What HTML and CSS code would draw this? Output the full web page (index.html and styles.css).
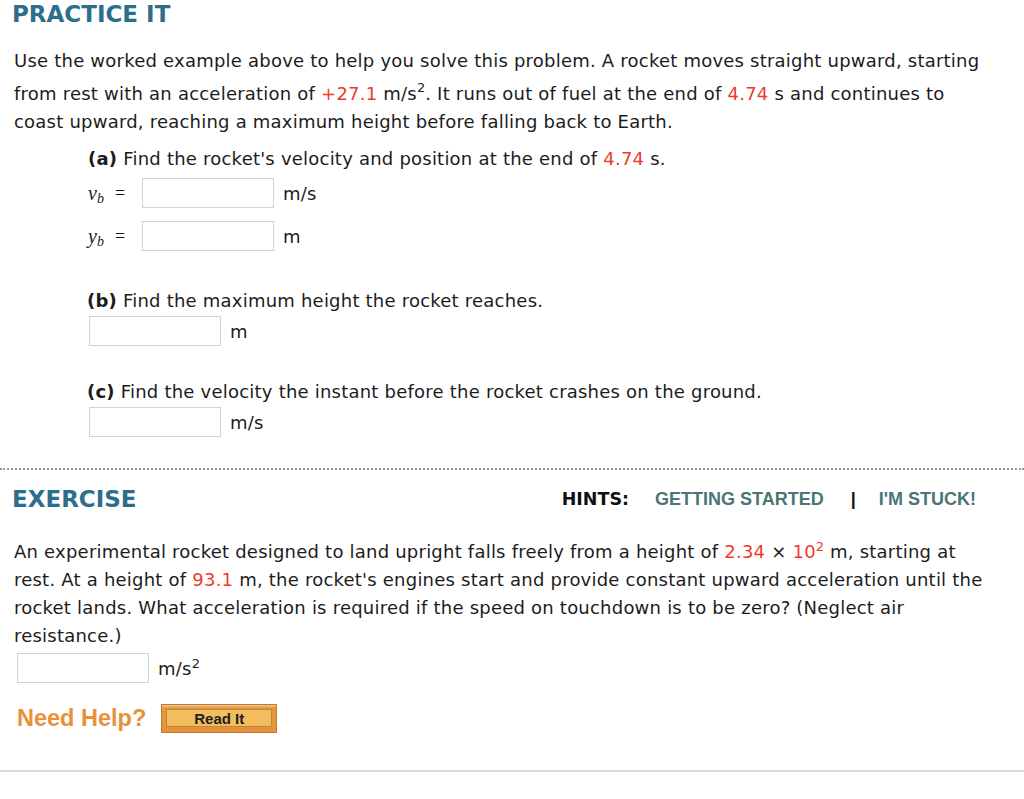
FILE: index.html
```html
<!DOCTYPE html>
<html>
<head>
<meta charset="utf-8">
<link rel="stylesheet" href="styles.css">
</head>
<body>
<section class="practice">
  <h2 class="title">PRACTICE IT</h2>
  <p class="text intro">Use the worked example above to help you solve this problem. A rocket moves straight upward, starting from rest with an acceleration of <span class="red">+27.1</span> m/s<sup>2</sup>. It runs out of fuel at the end of <span class="red">4.74</span> s and continues to coast upward, reaching a maximum height before falling back to Earth.</p>
  <div class="part part-a">
    <p class="text q"><b>(a)</b> Find the rocket's velocity and position at the end of <span class="red">4.74</span> s.</p>
    <div class="eqrow">
      <span class="var"><i>v<sub>b</sub></i></span><span class="eq">=</span><span class="box"></span><span class="unit">m/s</span>
    </div>
    <div class="eqrow second">
      <span class="var"><i>y<sub>b</sub></i></span><span class="eq">=</span><span class="box"></span><span class="unit">m</span>
    </div>
  </div>
  <div class="part part-b">
    <p class="text q"><b>(b)</b> Find the maximum height the rocket reaches.</p>
    <div class="ansrow"><span class="box"></span><span class="unit">m</span></div>
  </div>
  <div class="part part-c">
    <p class="text q"><b>(c)</b> Find the velocity the instant before the rocket crashes on the ground.</p>
    <div class="ansrow"><span class="box"></span><span class="unit">m/s</span></div>
  </div>
</section>
<div class="dots"></div>
<section class="exercise">
  <div class="exhead">
    <h2 class="title">EXERCISE</h2>
    <div class="hints"><span class="hl">HINTS:</span><span class="hlink">GETTING STARTED</span><span class="sep">|</span><span class="hlink">I'M STUCK!</span></div>
  </div>
  <p class="text expara">An experimental rocket designed to land upright falls freely from a height of <span class="red">2.34</span> × <span class="red">10<sup>2</sup></span> m, starting at rest. At a height of <span class="red">93.1</span> m, the rocket's engines start and provide constant upward acceleration until the rocket lands. What acceleration is required if the speed on touchdown is to be zero? (Neglect air resistance.)</p>
  <div class="ansrow exans"><span class="box"></span><span class="unit">m/s<sup>2</sup></span></div>
  <div class="help"><span class="need">Need Help?</span><span class="btn"><span class="btn-in">Read It</span></span></div>
</section>
<div class="rule"></div>
</body>
</html>
```
FILE: styles.css
```css
html, body { margin: 0; padding: 0; background: #fff; }
body { font-family: "DejaVu Sans", Verdana, sans-serif; color: #1c1c1c; width: 1024px; }
.practice { padding: 0 34px 0 12px; }
.title { margin: 0; font: bold 23px "DejaVu Sans", Verdana, sans-serif; color: #2d6e8c; }
.practice .title { padding-top: 1px; }
.text { font-size: 18px; letter-spacing: 0.22px; line-height: 28px; margin: 0; }
.text sup, .unit sup { font-size: 13px; letter-spacing: 0; line-height: 0; vertical-align: 7px; }
.intro sup { line-height: 25px; vertical-align: 8px; }
.red { color: #ee3a2e; }
.intro { margin-top: 20px; padding-left: 2px; }
.part { padding-left: 76px; }
.part-a .q { margin-top: 9px; }
.eqrow { display: flex; align-items: center; height: 30px; margin-top: 5px; }
.eqrow.second { margin-top: 13px; }
.var { display: inline-block; width: 27px; font-family: "Liberation Serif", serif; font-size: 20px; }
.var sub { font-size: 14px; vertical-align: -3px; line-height: 0; }
.eq { display: inline-block; width: 27px; font-family: "Liberation Serif", serif; font-size: 18px; }
.box { display: inline-block; width: 130px; height: 28px; border: 1px solid #d2d2d2; background: #fff; flex: none; }
.unit { font-size: 18px; letter-spacing: 0.22px; margin-left: 9px; }
.part-b { padding-left: 75px; }
.part-b .q { margin-top: 36px; }
.part-c { padding-left: 75px; }
.part-c .q { margin-top: 32px; }
.ansrow { display: flex; align-items: center; margin-top: 1px; padding-left: 2px; }
.dots { margin-top: 31px; height: 0; border-top: 2px dotted #999; }
.exercise { padding: 0 34px 0 12px; }
.exhead { display: flex; align-items: center; justify-content: space-between; margin-top: 16px; }
.hints { font-family: "Liberation Sans", Arial, sans-serif; font-weight: bold; font-size: 18px; display: flex; align-items: baseline; margin-right: 14px; }
.hl { font-family: "DejaVu Sans", Verdana, sans-serif; font-size: 17.5px; color: #111; margin-right: 26px; }
.hlink { color: #4b7575; }
.sep { color: #111; margin: 0 23px 0 27px; }
.expara { margin-top: 26px; padding-left: 2px; }
.exans { margin-top: 3px; padding-left: 5px; }
.help { display: flex; align-items: center; margin-top: 21px; padding-left: 5px; }
.need { font-family: "Liberation Sans", Arial, sans-serif; font-weight: bold; font-size: 23.5px; color: #e8913a; margin-right: 15px; }
.btn { display: inline-block; border: 1px solid #b97b37; background: linear-gradient(#f6c98f 0, #e9953d 3px, #e8913a 100%); padding: 4px 4px 5px; }
.btn-in { display: block; width: 104px; height: 16px; background: #f3bc5c; border: 1px solid #b38a45; text-align: center; font-family: "Liberation Sans", Arial, sans-serif; font-weight: bold; font-size: 15px; line-height: 17px; color: #1e1e1e; }
.rule { margin-top: 37px; height: 0; border-top: 2px solid #dadada; }
```
